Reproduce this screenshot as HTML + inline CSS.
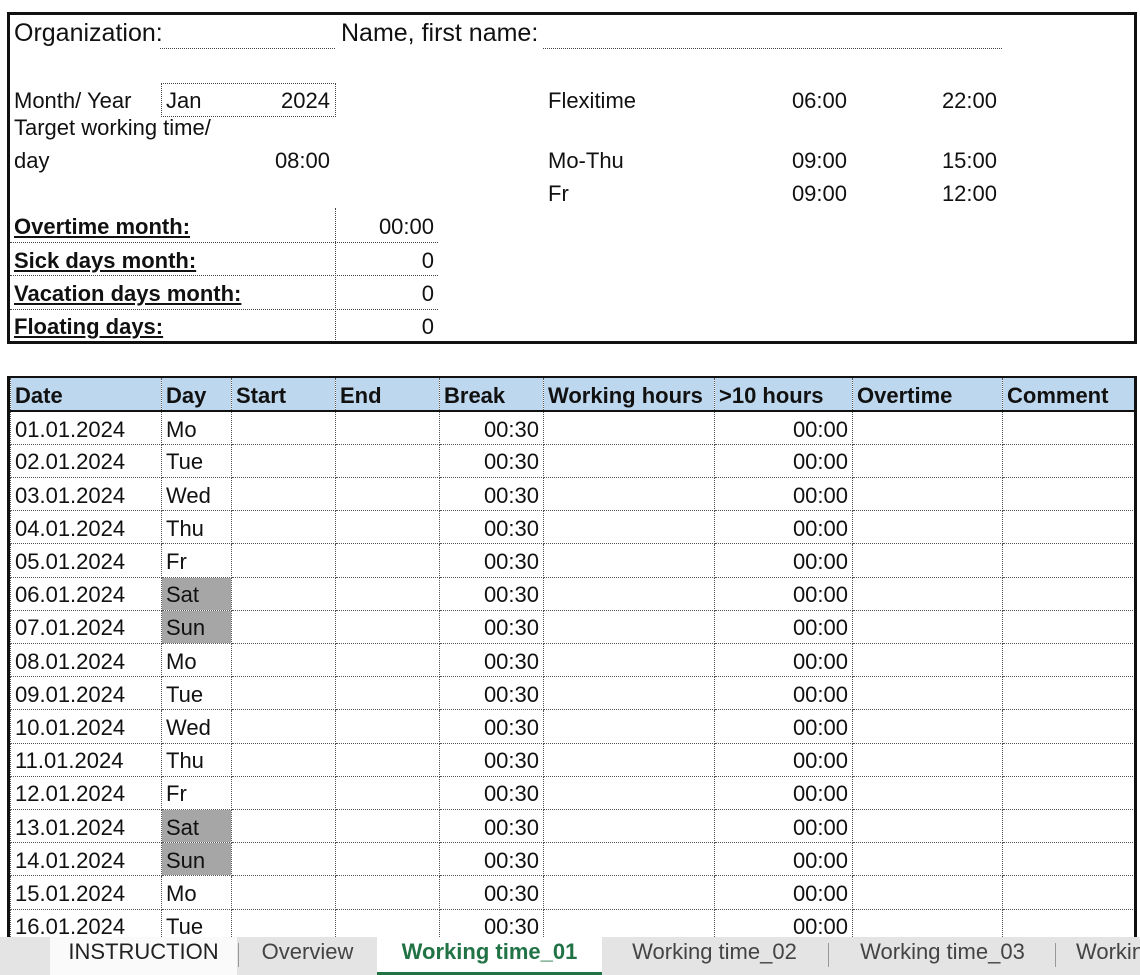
<!DOCTYPE html>
<html><head><meta charset="utf-8"><style>
body{margin:0;width:1140px;height:975px;overflow:hidden;background:#fff;font-family:"Liberation Sans",sans-serif;color:#111;position:relative}
.a{position:absolute;font-size:22px;line-height:22px;white-space:nowrap}
.r{text-align:right}
.b{font-weight:bold;text-decoration:underline}
.dh{position:absolute;height:0;border-top:1px dotted #444}
.dv{position:absolute;width:0;border-left:1px dotted #444}
#box{position:absolute;left:7px;top:12px;width:1124px;height:326px;border:3px solid #111}
table{position:absolute;left:10px;top:378px;border-collapse:collapse;table-layout:fixed;font-size:22px}
tr{height:33.2px}
td{border:1px dotted #555;padding:3px 4px 0 4px;white-space:nowrap;overflow:hidden;line-height:22px}
tr.h td{background:#bdd7ee;font-weight:bold;border-bottom:2px solid #111;border-top:none}
td.n{text-align:right}
td.g{background:#a6a6a6}
#tl{position:absolute;left:7px;top:376px;width:3px;height:570px;background:#111}
#tt{position:absolute;left:7px;top:376px;width:1130px;height:2px;background:#111}
#tr{position:absolute;left:1134px;top:376px;width:3px;height:570px;background:#111}
#tabs{position:absolute;left:0;top:937px;width:1140px;height:38px;background:#e4e4e4}
.tab{position:absolute;top:0;height:38px;line-height:30px;font-size:22px;color:#444;text-align:center}
</style></head><body>
<div id="box"></div>
<div class="a" style="left:14px;top:22px;font-size:25px">Organization:</div>
<div class="dh" style="left:160px;width:175px;top:48px"></div>
<div class="a" style="left:341px;top:22px;font-size:25px">Name, first name:</div>
<div class="dh" style="left:543px;width:459px;top:48px"></div>
<div class="a" style="left:14px;top:90px">Month/ Year</div>
<div style="position:absolute;left:161px;top:83px;width:173px;height:32px;border:1px dotted #444"></div>
<div class="a" style="left:166px;top:90px">Jan</div>
<div class="a r" style="right:810px;top:90px">2024</div>
<div class="a" style="left:14px;top:117px">Target working time/</div>
<div class="a" style="left:14px;top:150px">day</div>
<div class="a r" style="right:810px;top:150px">08:00</div>
<div class="a" style="left:548px;top:90px">Flexitime</div>
<div class="a r" style="right:293px;top:90px">06:00</div>
<div class="a r" style="right:143px;top:90px">22:00</div>
<div class="a" style="left:548px;top:150px">Mo-Thu</div>
<div class="a r" style="right:293px;top:150px">09:00</div>
<div class="a r" style="right:143px;top:150px">15:00</div>
<div class="a" style="left:548px;top:183px">Fr</div>
<div class="a r" style="right:293px;top:183px">09:00</div>
<div class="a r" style="right:143px;top:183px">12:00</div>
<div class="dv" style="left:335px;top:208px;height:132px"></div>
<div class="dh" style="left:10px;width:428px;top:242px"></div>
<div class="dh" style="left:10px;width:428px;top:275px"></div>
<div class="dh" style="left:10px;width:428px;top:309px"></div>
<div class="a b" style="left:14px;top:216px">Overtime month:</div>
<div class="a r" style="right:706px;top:216px">00:00</div>
<div class="a b" style="left:14px;top:250px">Sick days month:</div>
<div class="a r" style="right:706px;top:250px">0</div>
<div class="a b" style="left:14px;top:283px">Vacation days month:</div>
<div class="a r" style="right:706px;top:283px">0</div>
<div class="a b" style="left:14px;top:316px">Floating days:</div>
<div class="a r" style="right:706px;top:316px">0</div>

<table>
<colgroup><col style="width:151px"><col style="width:70px"><col style="width:104px"><col style="width:104px"><col style="width:104px"><col style="width:171px"><col style="width:138px"><col style="width:150px"><col style="width:134px"></colgroup>
<tr class="h"><td>Date</td><td>Day</td><td>Start</td><td>End</td><td>Break</td><td>Working hours</td><td>&gt;10 hours</td><td>Overtime</td><td>Comment</td></tr>
<tr><td>01.01.2024</td><td>Mo</td><td></td><td></td><td class="n">00:30</td><td></td><td class="n">00:00</td><td></td><td></td></tr>
<tr><td>02.01.2024</td><td>Tue</td><td></td><td></td><td class="n">00:30</td><td></td><td class="n">00:00</td><td></td><td></td></tr>
<tr><td>03.01.2024</td><td>Wed</td><td></td><td></td><td class="n">00:30</td><td></td><td class="n">00:00</td><td></td><td></td></tr>
<tr><td>04.01.2024</td><td>Thu</td><td></td><td></td><td class="n">00:30</td><td></td><td class="n">00:00</td><td></td><td></td></tr>
<tr><td>05.01.2024</td><td>Fr</td><td></td><td></td><td class="n">00:30</td><td></td><td class="n">00:00</td><td></td><td></td></tr>
<tr><td>06.01.2024</td><td class="g">Sat</td><td></td><td></td><td class="n">00:30</td><td></td><td class="n">00:00</td><td></td><td></td></tr>
<tr><td>07.01.2024</td><td class="g">Sun</td><td></td><td></td><td class="n">00:30</td><td></td><td class="n">00:00</td><td></td><td></td></tr>
<tr><td>08.01.2024</td><td>Mo</td><td></td><td></td><td class="n">00:30</td><td></td><td class="n">00:00</td><td></td><td></td></tr>
<tr><td>09.01.2024</td><td>Tue</td><td></td><td></td><td class="n">00:30</td><td></td><td class="n">00:00</td><td></td><td></td></tr>
<tr><td>10.01.2024</td><td>Wed</td><td></td><td></td><td class="n">00:30</td><td></td><td class="n">00:00</td><td></td><td></td></tr>
<tr><td>11.01.2024</td><td>Thu</td><td></td><td></td><td class="n">00:30</td><td></td><td class="n">00:00</td><td></td><td></td></tr>
<tr><td>12.01.2024</td><td>Fr</td><td></td><td></td><td class="n">00:30</td><td></td><td class="n">00:00</td><td></td><td></td></tr>
<tr><td>13.01.2024</td><td class="g">Sat</td><td></td><td></td><td class="n">00:30</td><td></td><td class="n">00:00</td><td></td><td></td></tr>
<tr><td>14.01.2024</td><td class="g">Sun</td><td></td><td></td><td class="n">00:30</td><td></td><td class="n">00:00</td><td></td><td></td></tr>
<tr><td>15.01.2024</td><td>Mo</td><td></td><td></td><td class="n">00:30</td><td></td><td class="n">00:00</td><td></td><td></td></tr>
<tr><td>16.01.2024</td><td>Tue</td><td></td><td></td><td class="n">00:30</td><td></td><td class="n">00:00</td><td></td><td></td></tr>
</table>
<div id="tt"></div><div id="tl"></div><div id="tr"></div>

<div id="tabs">
<div class="tab" style="left:50px;width:187px;background:#fafafa;color:#222">INSTRUCTION</div>
<div style="position:absolute;left:238px;top:6px;width:1px;height:24px;background:#999"></div>
<div class="tab" style="left:240px;width:135px">Overview</div>
<div class="tab" style="left:377px;width:225px;background:#fff;color:#217346;font-weight:bold;border-bottom:3px solid #217346;height:35px">Working time_01</div>
<div class="tab" style="left:602px;width:225px">Working time_02</div>
<div style="position:absolute;left:828px;top:6px;width:1px;height:24px;background:#999"></div>
<div class="tab" style="left:830px;width:225px">Working time_03</div>
<div style="position:absolute;left:1055px;top:6px;width:1px;height:24px;background:#999"></div>
<div class="tab" style="left:1076px;width:80px;text-align:left">Working</div>
</div>
</body></html>
